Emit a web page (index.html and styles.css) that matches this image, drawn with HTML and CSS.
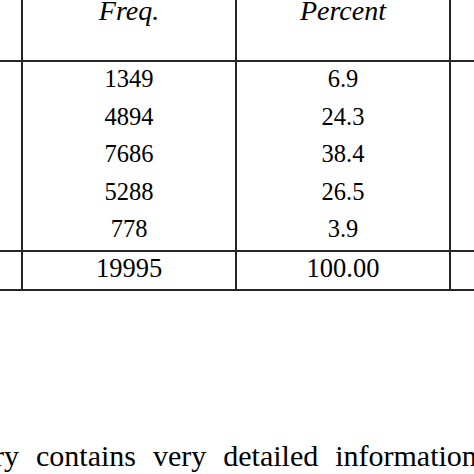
FILE: index.html
```html
<!DOCTYPE html>
<html>
<head>
<meta charset="utf-8">
<link rel="stylesheet" href="styles.css">
</head>
<body>
<div class="page">
  <table class="stats">
    <colgroup>
      <col class="c-lab">
      <col class="c-num">
      <col class="c-num">
      <col class="c-rest">
    </colgroup>
    <thead>
      <tr><th></th><th>Freq.</th><th>Percent</th><th></th></tr>
    </thead>
    <tbody>
      <tr><td></td><td>1349</td><td>6.9</td><td></td></tr>
      <tr><td></td><td>4894</td><td>24.3</td><td></td></tr>
      <tr><td></td><td>7686</td><td>38.4</td><td></td></tr>
      <tr><td></td><td>5288</td><td>26.5</td><td></td></tr>
      <tr><td></td><td>778</td><td>3.9</td><td></td></tr>
    </tbody>
    <tfoot>
      <tr><td></td><td>19995</td><td>100.00</td><td></td></tr>
    </tfoot>
  </table>
  <p class="body-text">ry contains very detailed information</p>
</div>
</body>
</html>
```

FILE: styles.css
```css
html, body {
  margin: 0;
  padding: 0;
  background: #ffffff;
}

.page {
  width: 474px;
  height: 474px;
  overflow: hidden;
  font-family: "Liberation Serif", "Times New Roman", serif;
  color: #000000;
}

.stats {
  border-collapse: collapse;
  table-layout: fixed;
  width: 520px;
}

.c-lab { width: 22px; }
.c-num { width: 214px; }
.c-rest { width: 70px; }

.stats th,
.stats td {
  padding: 0;
  text-align: center;
  vertical-align: top;
  font-weight: normal;
  border-right: 2px solid #262626;
}

.stats th:last-child,
.stats td:last-child {
  border-right: none;
}

.stats thead th {
  height: 60px;
  font-size: 28px;
  font-style: italic;
  line-height: 21px;
  border-bottom: 2px solid #262626;
}

.stats tbody td {
  height: 37.5px;
  font-size: 24.5px;
  line-height: 33px;
}

.stats tbody tr:last-child td {
  border-bottom: 2px solid #262626;
}

.stats tfoot td {
  height: 37px;
  font-size: 26.5px;
  line-height: 33px;
  border-bottom: 2px solid #262626;
}

.body-text {
  margin: 150px 0 0 0;
  font-size: 30px;
  line-height: 30px;
  white-space: nowrap;
  word-spacing: 9.5px;
  text-indent: -6px;
}
```
